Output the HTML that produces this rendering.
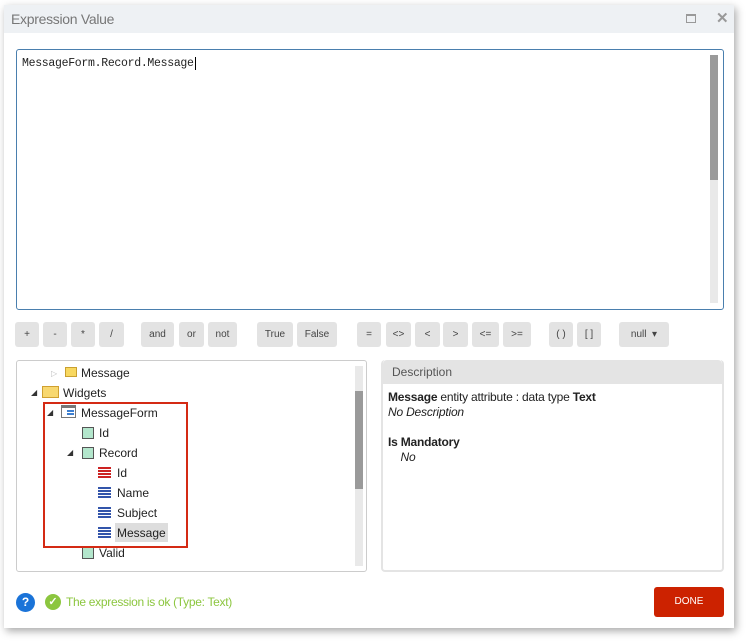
<!DOCTYPE html>
<html><head><style>
*{box-sizing:border-box;margin:0;padding:0}
body{width:749px;height:643px;background:#fff;position:relative;overflow:hidden;font-family:"Liberation Sans",sans-serif;font-size:12px;color:#222}
.a{position:absolute}
#dlg{left:4px;top:5px;width:730px;height:623px;background:#fff;box-shadow:2px 3px 8px rgba(0,0,0,.35)}
.title{left:0;top:0;width:730px;height:28px;background:#eef1f4;color:#777;font-size:14px;padding:6px 0 0 7px;letter-spacing:-0.3px}
.btn{top:322px;height:25px;background:#e3e3e3;border-radius:3px;color:#444;font-size:10px;text-align:center;line-height:25px}
.t{position:absolute;font-size:12px;color:#222;white-space:nowrap;height:20px;line-height:20px}
.sq{position:absolute;width:12px;height:12px;background:#b3e6cc;border:1px solid #555}
.li{position:absolute;width:13px;height:11px;background:repeating-linear-gradient(#3355aa 0 2px,#fff 2px 3px)}
.tri{position:absolute;font-size:8px;color:#333;line-height:10px}
</style></head><body>
<div id="dlg" class="a">
<div class="a title">Expression Value</div>
<div class="a" style="left:682px;top:9px;width:10px;height:9px;border:1px solid #999;border-top-width:2px"></div>
<div class="a" style="left:712px;top:4px;color:#999;font-size:15px;font-weight:bold">✕</div>
</div>
<div class="a" style="left:16px;top:49px;width:708px;height:261px;border:1px solid #4a7fae;border-radius:3px"></div>
<div class="a" style="left:22px;top:57px;font-family:'Liberation Mono',monospace;font-size:11.5px;letter-spacing:-0.3px">MessageForm.Record.Message<span style="border-left:1px solid #000;margin-left:1px"></span></div>
<div class="a" style="left:710px;top:55px;width:8px;height:248px;background:#e9e9e9"></div>
<div class="a" style="left:710px;top:55px;width:8px;height:125px;background:#9a9a9a"></div>

<div class="a btn" style="left:15px;width:24px">+</div>
<div class="a btn" style="left:43px;width:24px">-</div>
<div class="a btn" style="left:71px;width:24px">*</div>
<div class="a btn" style="left:99px;width:25px">/</div>
<div class="a btn" style="left:141px;width:33px">and</div>
<div class="a btn" style="left:179px;width:25px">or</div>
<div class="a btn" style="left:208px;width:29px">not</div>
<div class="a btn" style="left:257px;width:36px">True</div>
<div class="a btn" style="left:297px;width:40px">False</div>
<div class="a btn" style="left:357px;width:24px">=</div>
<div class="a btn" style="left:386px;width:25px">&lt;&gt;</div>
<div class="a btn" style="left:415px;width:25px">&lt;</div>
<div class="a btn" style="left:443px;width:25px">&gt;</div>
<div class="a btn" style="left:472px;width:27px">&lt;=</div>
<div class="a btn" style="left:503px;width:28px">&gt;=</div>
<div class="a btn" style="left:549px;width:24px">( )</div>
<div class="a btn" style="left:577px;width:24px">[ ]</div>
<div class="a btn" style="left:619px;width:50px">null &nbsp;▾</div>

<div class="a" style="left:16px;top:360px;width:351px;height:212px;border:1px solid #ccc;border-radius:3px;overflow:hidden">
<div class="a" style="left:338px;top:5px;width:8px;height:200px;background:#e9e9e9"></div>
<div class="a" style="left:338px;top:30px;width:8px;height:98px;background:#9a9a9a"></div>

<span class="tri" style="left:34px;top:8px;color:#bbb">▷</span>
<span class="a" style="left:48px;top:6px;width:12px;height:10px;background:#f8d860;border:1px solid #c9a030"></span>
<span class="t" style="left:64px;top:2px">Message</span>

<span class="tri" style="left:14px;top:27px">◢</span>
<span class="a" style="left:25px;top:25px;width:17px;height:12px;background:#f8d870;border:1px solid #d0a030"></span>
<span class="t" style="left:46px;top:22px">Widgets</span>

<span class="tri" style="left:30px;top:47px">◢</span>
<span class="a" style="left:44px;top:44px;width:15px;height:13px;border:1px solid #777;border-top:3px solid #777;background:#fff"><span style="position:absolute;left:5px;top:2px;width:7px;height:5px;border-top:2px solid #3d7fd0;border-bottom:2px solid #3d7fd0"></span></span>
<span class="t" style="left:64px;top:42px">MessageForm</span>

<span class="sq" style="left:65px;top:66px"></span>
<span class="t" style="left:82px;top:62px">Id</span>

<span class="tri" style="left:50px;top:87px">◢</span>
<span class="sq" style="left:65px;top:86px"></span>
<span class="t" style="left:82px;top:82px">Record</span>

<span class="li" style="left:81px;top:106px;background:repeating-linear-gradient(#cc2222 0 2px,#fff 2px 3px)"></span>
<span class="t" style="left:100px;top:102px">Id</span>
<span class="li" style="left:81px;top:126px"></span>
<span class="t" style="left:100px;top:122px">Name</span>
<span class="li" style="left:81px;top:146px"></span>
<span class="t" style="left:100px;top:142px">Subject</span>
<span class="li" style="left:81px;top:166px"></span>
<span class="t" style="left:98px;top:162px;background:#ddd;padding:0 2px;height:19px;line-height:20px">Message</span>

<span class="sq" style="left:65px;top:186px"></span>
<span class="t" style="left:82px;top:182px">Valid</span>
<div class="a" style="left:26px;top:41px;width:145px;height:146px;border:2px solid #d42a14"></div>
</div>

<div class="a" style="left:381px;top:360px;width:343px;height:212px;border:2px solid #e4e4e4;border-top:0;border-radius:4px;background:#fff">
<div style="height:24px;background:#e4e4e4;color:#555;padding:5px 0 0 9px;border-radius:4px 4px 0 0">Description</div>
<div style="padding:6px 0 0 5px;line-height:15px;letter-spacing:-0.2px">
<b>Message</b> entity attribute : data type <b>Text</b><br><i>No Description</i><br><br><b>Is Mandatory</b><br>&nbsp;&nbsp;&nbsp;&nbsp;<i>No</i></div>
</div>

<div class="a" style="left:16px;top:593px;width:19px;height:19px;border-radius:50%;background:#1a73d8;color:#fff;font-weight:bold;text-align:center;line-height:19px;font-size:12px">?</div>
<div class="a" style="left:45px;top:594px;width:16px;height:16px;border-radius:50%;background:#8cc63f;color:#fff;font-size:11px;text-align:center;line-height:16px;font-weight:bold">✓</div>
<div class="a" style="left:66px;top:595px;color:#8cc63f;font-size:12px;letter-spacing:-0.3px">The expression is ok (Type: Text)</div>
<div class="a" style="left:654px;top:587px;width:70px;height:30px;background:#cc2200;border-radius:3px;color:#fff;font-size:10px;text-align:center;line-height:30px">DONE</div>
</body></html>
